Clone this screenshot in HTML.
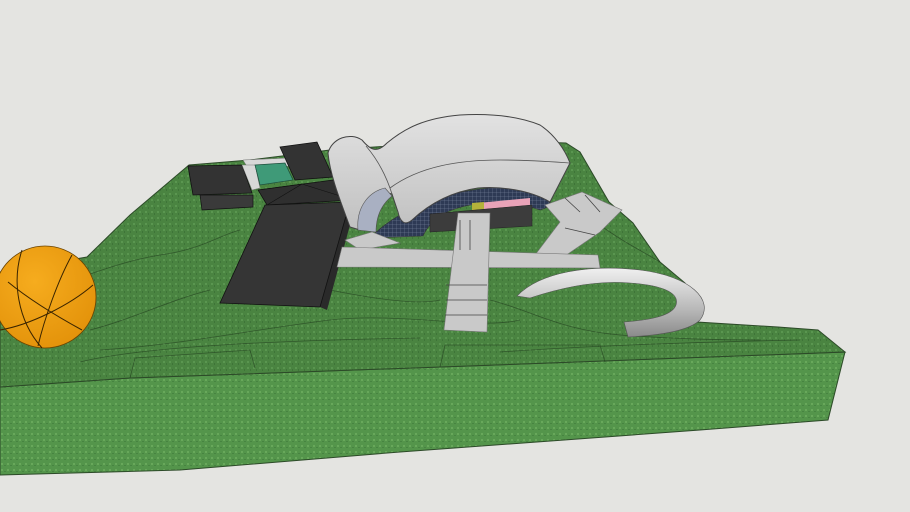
<!DOCTYPE html>
<html><head><meta charset="utf-8"><style>
html,body{margin:0;padding:0;background:#e4e4e1;}
svg{display:block}
</style></head><body>
<svg width="910" height="512" viewBox="0 0 910 512" xmlns="http://www.w3.org/2000/svg">
<defs>
<pattern id="g1" width="6" height="6" patternUnits="userSpaceOnUse">
<rect width="6" height="6" fill="#4a8441"/><rect x="1" y="1" width="2" height="2" fill="#5a9650"/><rect x="4" y="3" width="1" height="2" fill="#3e7438"/>
</pattern>
<pattern id="g2" width="6" height="6" patternUnits="userSpaceOnUse">
<rect width="6" height="6" fill="#54954b"/><rect x="1" y="1" width="2" height="2" fill="#68a85b"/><rect x="4" y="3" width="2" height="1" fill="#478441"/>
</pattern>
<linearGradient id="shell" x1="0" y1="0" x2="0" y2="1"><stop offset="0" stop-color="#e2e2e2"/><stop offset="1" stop-color="#c0c0c0"/></linearGradient>
<linearGradient id="tube" x1="0" y1="0" x2="0" y2="1"><stop offset="0" stop-color="#f0f0f0"/><stop offset="0.6" stop-color="#b8b8b8"/><stop offset="1" stop-color="#8a8a8a"/></linearGradient>
<pattern id="glass" width="4" height="4" patternUnits="userSpaceOnUse"><rect width="4" height="4" fill="#2e3a55"/><path d="M0 0H4M0 0V4" stroke="#7d8aa3" stroke-width="0.5"/></pattern>
<radialGradient id="ball" cx="0.4" cy="0.35" r="0.7"><stop offset="0" stop-color="#f6ac1e"/><stop offset="1" stop-color="#e3920a"/></radialGradient>
</defs>
<!-- side face -->
<polygon points="0,387 130,378 440,367 845,352 828,420 700,430 400,452 180,470 0,475" fill="url(#g2)" stroke="#2c4a28" stroke-width="1"/>
<!-- top surface -->
<polygon points="0,272 87,257 130,215 189,165 250,160 330,150 480,140 566,143 580,152 609,202 633,223 660,262 685,283 697,322 778,327 818,330 845,352 440,367 130,378 0,387" fill="url(#g1)" stroke="#2c4a28" stroke-width="1"/>
<!-- contour lines -->
<g fill="none" stroke="#1f3a1c" stroke-width="0.8" opacity="0.6">
<path d="M0,300 C60,290 100,265 160,255 C200,250 220,235 240,230"/>
<path d="M90,330 C130,320 170,300 210,290"/>
<path d="M100,350 C180,345 250,330 330,320 C400,312 480,330 520,320"/>
<path d="M330,290 C380,300 420,305 440,300"/>
<path d="M490,300 C530,310 560,330 620,335 C660,338 700,340 760,340"/>
<path d="M600,225 C620,240 640,250 660,262"/>
<path d="M130,378 L135,358 L250,350 L255,368"/>
<path d="M440,367 L445,345 L600,345 L605,362"/>
<path d="M80,362 C150,345 300,340 420,338"/>
<path d="M500,352 C600,345 700,342 800,340"/>
</g>
<!-- small building -->
<polygon points="200,195 253,195 253,207 202,210" fill="#3a3a3a" stroke="#111" stroke-width="0.7"/>
<polygon points="188,166 242,165 252,193 193,195" fill="#333" stroke="#111" stroke-width="0.8"/>
<!-- stairs / pool -->
<polygon points="243,160 290,158 292,166 248,168" fill="#d8d8d8" stroke="#777" stroke-width="0.5"/>
<polygon points="242,165 255,165 260,188 252,190" fill="#d8d8d8" stroke="#777" stroke-width="0.5"/>
<polygon points="255,165 285,163 293,180 260,185" fill="#3f9a78" stroke="#1d4e3c" stroke-width="0.7"/>
<!-- top box -->
<polygon points="280,147 317,142 333,177 295,180" fill="#333" stroke="#111" stroke-width="0.8"/>
<!-- pyramid roof -->
<polygon points="258,190 333,180 353,200 267,205" fill="#2f2f2f" stroke="#111" stroke-width="0.8"/>
<path d="M258,190 L302,184 L353,200 M302,184 L267,205" stroke="#111" stroke-width="0.6" fill="none"/>
<!-- long roof -->
<polygon points="350,202 354,210 327,310 320,307" fill="#2a2a2a"/>
<polygon points="265,205 350,202 320,307 220,303" fill="#353535" stroke="#111" stroke-width="0.8"/>
<!-- glass arch -->
<path d="M370,238 C395,212 440,192 490,188 C520,186 540,194 553,205 L540,210 C510,199 470,201 445,213 C432,221 426,229 423,236 Z" fill="url(#glass)" stroke="#333" stroke-width="0.6"/>
<polygon points="478,203 530,198 530,215 478,220" fill="#e9a3b8"/>
<polygon points="472,203 484,202 484,215 472,216" fill="#b4b23a"/>
<polygon points="430,214 532,205 532,226 430,232" fill="#3c3c3c" stroke="#222" stroke-width="0.5"/>
<!-- shell -->
<path d="M328,153 C332,138 350,132 362,140 C372,152 378,152 387,143 C405,128 425,118 460,115 C495,113 520,117 540,125 C555,135 565,150 570,163 L550,202 C530,190 500,186 478,188 C450,192 428,205 412,220 C405,226 400,222 398,212 L392,194 C380,190 372,198 368,212 L360,230 L350,227 C340,200 330,175 328,153 Z" fill="url(#shell)" stroke="#444" stroke-width="1"/>
<path d="M358,230 C356,208 368,192 385,188 L392,196 C382,204 376,215 376,232 Z" fill="#a9b0c2" stroke="#555" stroke-width="0.6"/>
<path d="M366,146 C378,160 386,175 392,194 M390,188 C420,166 460,160 500,160 C530,160 555,162 570,163" fill="none" stroke="#555" stroke-width="0.8"/>
<!-- walkways -->
<g fill="#c9c9c9" stroke="#777" stroke-width="0.6">
<polygon points="345,240 372,232 400,243 360,250"/>
<polygon points="545,205 582,192 622,210 600,232 562,258 535,255 560,222"/>
<polygon points="342,247 598,255 600,268 337,267"/>
<polygon points="458,213 490,213 487,332 444,330"/>
</g>
<g stroke="#444" stroke-width="0.8">
<path d="M446,285 H487 M446,300 H487 M445,315 H487 M460,220 V250 M470,220 V250"/>
<path d="M565,198 L580,212 M585,195 L600,212 M565,228 L595,235"/>
</g>
<!-- curved tube -->
<path d="M517,296 C540,272 590,264 640,270 C690,276 715,300 700,320 C690,330 665,335 628,337 L624,322 C650,320 672,316 676,305 C680,292 660,285 630,283 C595,280 560,288 530,298 Z" fill="url(#tube)" stroke="#555" stroke-width="0.6"/>
<!-- ball -->
<circle cx="45" cy="297" r="51" fill="url(#ball)" stroke="#6b4300" stroke-width="0.8"/>
<g fill="none" stroke="#3a2400" stroke-width="1">
<path d="M22,250 C12,280 17,320 42,348"/>
<path d="M72,255 C58,280 44,320 38,346"/>
<path d="M0,330 C30,325 70,305 93,285"/>
<path d="M8,282 C30,300 60,318 82,330"/>
</g>
</svg>
</body></html>
